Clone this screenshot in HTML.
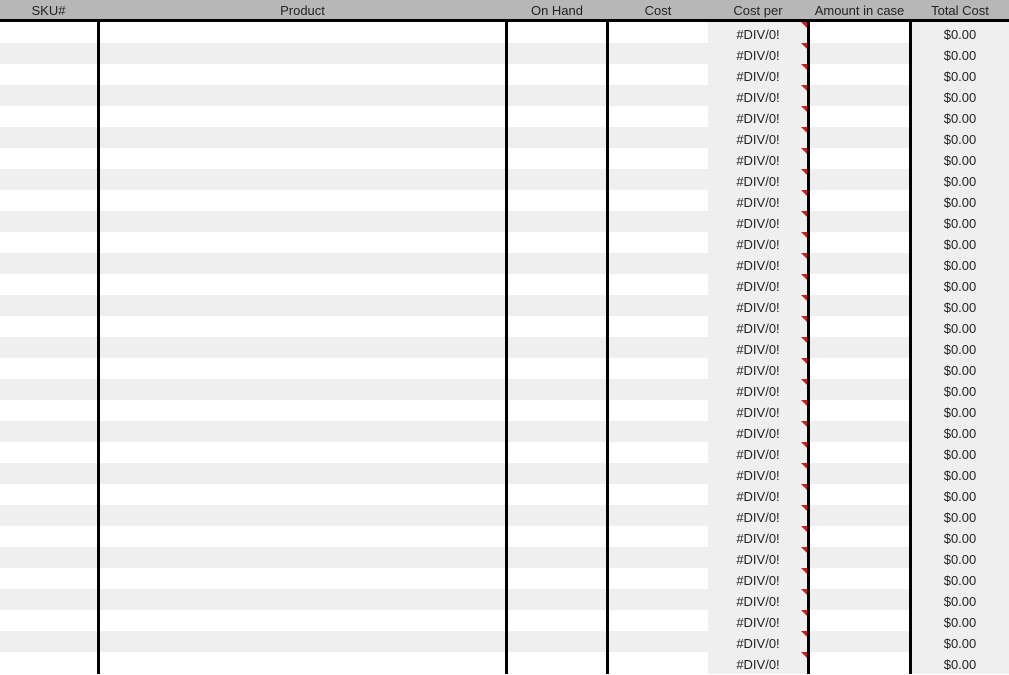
<!DOCTYPE html>
<html><head><meta charset="utf-8"><style>
body{margin:0;width:1009px;height:674px;overflow:hidden;background:#fff;font-family:"Liberation Sans",Arial,sans-serif;position:relative}
.hdr{position:absolute;left:0;top:0;width:1009px;height:19px;background:#b7b7b7}
.hb{position:absolute;left:0;top:19px;width:1009px;height:3px;background:#000}
.h{position:absolute;top:3px;font-size:13px;color:#222;text-align:center}
.row{position:absolute;left:0;width:1009px;height:21px}
.g{background:#efefef}
.cg{position:absolute;top:22px;height:652px;background:#efefef}
.v{position:absolute;top:19px;width:3px;height:655px;background:#000}
.t{position:absolute;font-size:13px;color:#222;text-align:center;height:21px;line-height:21px}
.tri{position:absolute;width:0;height:0;border-top:6px solid #c5221f;border-left:6px solid transparent}
</style></head><body>
<div class="hdr"></div>
<div class="h" style="left:0;width:97px">SKU#</div>
<div class="h" style="left:100px;width:405px">Product</div>
<div class="h" style="left:508px;width:98px">On Hand</div>
<div class="h" style="left:609px;width:98px">Cost</div>
<div class="h" style="left:708px;width:100px">Cost per</div>
<div class="h" style="left:810px;width:99px">Amount in case</div>
<div class="h" style="left:911px;width:98px">Total Cost</div>
<div id="rows"></div>
<script>
var h='';
for(var i=0;i<31;i++){var y=22+i*21;
if(i%2==1)h+='<div class="row g" style="top:'+y+'px"></div>';}
h+='<div class="cg" style="left:708px;width:99px"></div><div class="cg" style="left:911px;width:98px"></div>';
for(var i=0;i<31;i++){var y=22+i*21;
h+='<div class="t" style="left:708px;width:100px;top:'+(y+2)+'px">#DIV/0!</div>';
h+='<div class="t" style="left:911px;width:98px;top:'+(y+2)+'px">$0.00</div>';
h+='<div class="tri" style="left:801px;top:'+(y)+'px"></div>';}
document.getElementById('rows').innerHTML=h;
</script>
<div class="hb"></div>
<div class="v" style="left:97px"></div>
<div class="v" style="left:505px"></div>
<div class="v" style="left:606px"></div>
<div class="v" style="left:807px"></div>
<div class="v" style="left:909px"></div>
</body></html>
